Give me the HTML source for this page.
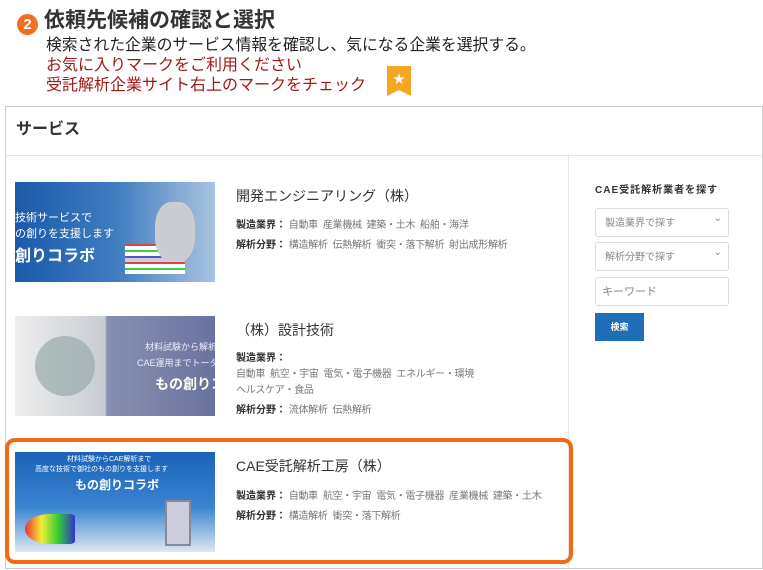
<!DOCTYPE html>
<html><head><meta charset="utf-8"><style>
*{margin:0;padding:0;box-sizing:border-box}
body{width:763px;height:570px;background:#fff;font-family:"Liberation Sans","Noto Sans CJK JP",sans-serif;position:relative;overflow:hidden;color:#333}
.a{position:absolute;white-space:nowrap}
.badge{left:17px;top:14px;width:21px;height:21px;border-radius:50%;background:#f07020;color:#fff;font-weight:bold;font-size:15px;text-align:center;line-height:21px}
.img{position:absolute;left:15px;width:200px;height:100px;overflow:hidden}
.lab{font-size:10px;color:#333;font-weight:bold}
.val{font-size:10px;color:#777;font-weight:normal;letter-spacing:-0.3px}
.sel{position:absolute;left:595px;width:134px;height:29px;border:1px solid #ddd;border-radius:3px;font-size:10px;color:#888;padding:5px 0 0 9px}
.sel:after{content:"⌄";position:absolute;right:6px;top:4px;font-size:10px;color:#888}
</style></head><body>
<div class="a badge">2</div>
<div class="a" style="left:44px;top:4px;font-size:21px;font-weight:bold;color:#333">依頼先候補の確認と選択</div>
<div class="a" style="left:46px;top:32px;font-size:15.8px;color:#222">検索された企業のサービス情報を確認し、気になる企業を選択する。</div>
<div class="a" style="left:46px;top:51px;font-size:16px;color:#a01818">お気に入りマークをご利用ください</div>
<div class="a" style="left:46px;top:71px;font-size:16px;color:#a01818">受託解析企業サイト右上のマークをチェック</div>
<svg class="a" style="left:387px;top:66px" width="24" height="30"><path d="M0 0H24V30L12 24L0 30Z" fill="#f5a623"/><text x="12" y="17" font-size="12" fill="#fff" text-anchor="middle">★</text></svg>

<div class="a" style="left:5px;top:106px;width:758px;height:463px;border:1px solid #ccc"></div>
<div class="a" style="left:16px;top:115px;font-size:16px;font-weight:bold;color:#333">サービス</div>
<div class="a" style="left:6px;top:155px;width:756px;height:1px;background:#e6e6e6"></div>
<div class="a" style="left:568px;top:156px;width:1px;height:412px;background:#e6e6e6"></div>

<div class="img" style="top:182px;background:linear-gradient(90deg,#1a5aa8,#3f7cc0 50%,#a9c4e0)">
<div class="a" style="left:0;top:28px;color:#fff;font-size:11px;line-height:16px">技術サービスで<br>の創りを支援します</div>
<div class="a" style="left:0;top:60px;color:#fff;font-size:16px;font-weight:bold">創りコラボ</div>
<div class="a" style="left:110px;top:62px;width:60px;height:30px;background:repeating-linear-gradient(#d44 0 2px,#fff 2px 6px,#4c4 6px 8px,#fff 8px 12px,#55c 12px 14px,#ccd 14px 18px)"></div>
<div class="a" style="left:140px;top:20px;width:40px;height:60px;background:#c9cdd3;border-radius:40%"></div>
</div>
<div class="img" style="top:316px;background:linear-gradient(90deg,#eee,#c8ccd2 45%,#8890b0 46%,#6a72a0)">
<div class="a" style="left:130px;top:24px;color:#eef;font-size:9px">材料試験から解析</div>
<div class="a" style="left:122px;top:40px;color:#eef;font-size:9px">CAE運用までトータ</div>
<div class="a" style="left:140px;top:58px;color:#ffe;font-size:14px;font-weight:bold">もの創りコラ</div>
<div class="a" style="left:20px;top:20px;width:60px;height:60px;border-radius:50%;background:#9aa;opacity:.7"></div>
</div>
<div class="img" style="top:452px;background:linear-gradient(#1a62b8,#3a84d0 55%,#dde8f2)">
<div class="a" style="left:52px;top:2px;color:#fff;font-size:7px">材料試験からCAE解析まで</div>
<div class="a" style="left:20px;top:12px;color:#fff;font-size:7px">高度な技術で御社のもの創りを支援します</div>
<div class="a" style="left:60px;top:24px;color:#fff;font-size:12px;font-weight:bold">もの創りコラボ</div>
<div class="a" style="left:10px;top:62px;width:50px;height:30px;background:linear-gradient(90deg,#e33,#ee3,#3c3,#33c);border-radius:50% 10% 10% 50%"></div>
<div class="a" style="left:150px;top:48px;width:26px;height:46px;background:#ccd;border:2px solid #889"></div>
</div>

<div class="a" style="left:236px;top:186px;font-size:14px;color:#333">開発エンジニアリング（株）</div>
<div class="a lab" style="left:236px;top:216px">製造業界： <span class="val">自動車&nbsp; 産業機械&nbsp; 建築・土木&nbsp; 船舶・海洋</span></div>
<div class="a lab" style="left:236px;top:236px">解析分野： <span class="val">構造解析&nbsp; 伝熱解析&nbsp; 衝突・落下解析&nbsp; 射出成形解析</span></div>

<div class="a" style="left:236px;top:320px;font-size:14px;color:#333">（株）設計技術</div>
<div class="a lab" style="left:236px;top:349px">製造業界：</div>
<div class="a val" style="left:236px;top:365px">自動車&nbsp; 航空・宇宙&nbsp; 電気・電子機器&nbsp; エネルギー・環境</div>
<div class="a val" style="left:236px;top:381px">ヘルスケア・食品</div>
<div class="a lab" style="left:236px;top:401px">解析分野： <span class="val">流体解析&nbsp; 伝熱解析</span></div>

<div class="a" style="left:236px;top:456px;font-size:14px;color:#333">CAE受託解析工房（株）</div>
<div class="a lab" style="left:236px;top:487px">製造業界： <span class="val">自動車&nbsp; 航空・宇宙&nbsp; 電気・電子機器&nbsp; 産業機械&nbsp; 建築・土木</span></div>
<div class="a lab" style="left:236px;top:507px">解析分野： <span class="val">構造解析&nbsp; 衝突・落下解析</span></div>

<div class="a" style="left:5px;top:438px;width:568px;height:126px;border:4px solid #f26a10;border-radius:10px"></div>

<div class="a" style="left:595px;top:181px;font-size:10px;font-weight:bold;color:#333;letter-spacing:1px">CAE受託解析業者を探す</div>
<div class="sel" style="top:208px">製造業界で探す</div>
<div class="sel" style="top:242px">解析分野で探す</div>
<div class="a" style="left:595px;top:277px;width:134px;height:29px;border:1px solid #ddd;border-radius:3px;font-size:11px;color:#888;padding:5px 0 0 6px">キーワード</div>
<div class="a" style="left:595px;top:313px;width:49px;height:28px;background:#1f6fb8;color:#fff;font-size:9px;font-weight:bold;text-align:center;line-height:28px">検索</div>
</body></html>
